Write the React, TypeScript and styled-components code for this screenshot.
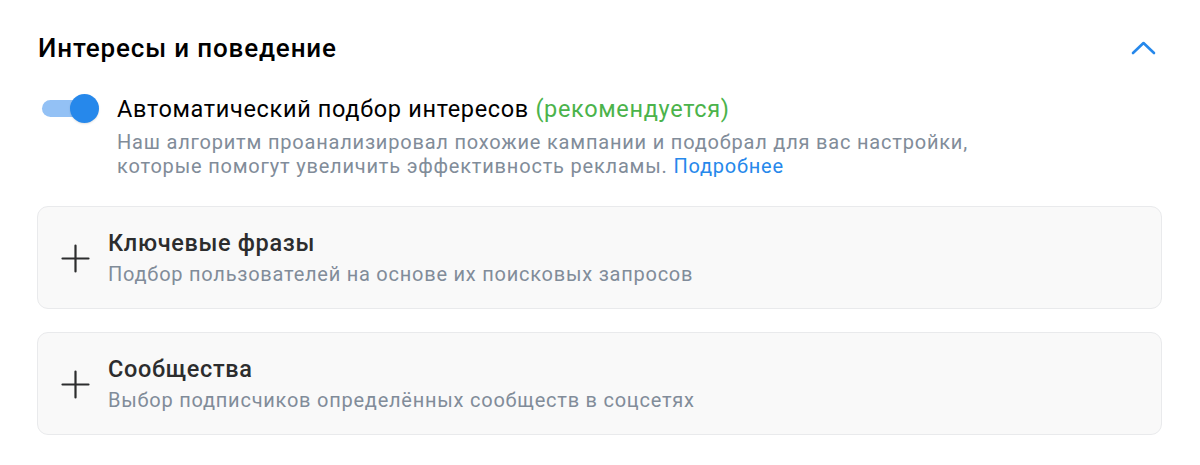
import React from 'react';
import styled, { createGlobalStyle } from 'styled-components';

const GlobalStyle = createGlobalStyle`
  body {
    margin: 0;
    background: #ffffff;
    font-family: Roboto, "Noto Sans", Arial, sans-serif;
    -webkit-font-smoothing: antialiased;
  }
`;

const Section = styled.div`
  padding: 34px 38px 0 37px;
`;

const Header = styled.div`
  display: flex;
  align-items: center;
  justify-content: space-between;
  height: 28px;
  padding-left: 1px;
`;

const Title = styled.h2`
  margin: 0;
  font-size: 26px;
  line-height: 28px;
  font-weight: 500;
  letter-spacing: 0.85px;
  color: #000000;
`;

const Chevron = styled.svg`
  margin-right: 6px;
`;

const AutoRow = styled.div`
  display: flex;
  margin-top: 35px;
`;

const Toggle = styled.div<{ $on: boolean }>`
  position: relative;
  flex: 0 0 auto;
  width: 57px;
  height: 29px;
  margin: -3px 18px 0 5px;

  &::before {
    content: '';
    position: absolute;
    left: 0;
    top: 6px;
    width: 52px;
    height: 17px;
    border-radius: 9px;
    background: ${(p) => (p.$on ? '#93c1f5' : '#d6d9de')};
  }

  &::after {
    content: '';
    position: absolute;
    top: 0;
    ${(p) => (p.$on ? 'right: 0;' : 'left: 0;')}
    width: 29px;
    height: 29px;
    border-radius: 50%;
    background: ${(p) => (p.$on ? '#2688eb' : '#ffffff')};
    box-shadow: 0 1px 2px rgba(0, 0, 0, 0.12);
  }
`;

const AutoText = styled.div`
  display: flex;
  flex-direction: column;
`;

const Label = styled.div`
  font-size: 23.5px;
  line-height: 24px;
  letter-spacing: 0.66px;
  color: #000000;
`;

const Recommended = styled.span`
  color: #4bb34b;
`;

const Description = styled.div`
  margin-top: 9px;
  font-size: 20px;
  line-height: 24px;
  letter-spacing: 0.8px;
  color: #818c99;
`;

const Link = styled.a`
  color: #2688eb;
  text-decoration: none;
`;

const Cards = styled.div`
  display: flex;
  flex-direction: column;
  gap: 23px;
  margin-top: 28px;
`;

const Card = styled.div`
  display: flex;
  align-items: center;
  padding: 24px 23px 22px;
  background: #f9f9f9;
  border: 1px solid #e9eaec;
  border-radius: 11px;
`;

const PlusIcon = styled.svg`
  flex: 0 0 auto;
  margin-right: 18px;
`;

const CardText = styled.div`
  display: flex;
  flex-direction: column;
`;

const CardTitle = styled.div`
  font-size: 23.5px;
  line-height: 24px;
  font-weight: 500;
  letter-spacing: 0.66px;
  color: #2c2d2e;
`;

const CardSubtitle = styled.div`
  margin-top: 7px;
  font-size: 20px;
  line-height: 24px;
  letter-spacing: 0.76px;
  color: #818c99;
`;

const cards = [
  { title: 'Ключевые фразы', subtitle: 'Подбор пользователей на основе их поисковых запросов' },
  { title: 'Сообщества', subtitle: 'Выбор подписчиков определённых сообществ в соцсетях' },
];

const Plus = () => (
  <PlusIcon width="29" height="29" viewBox="0 0 29 29" fill="none">
    <path d="M14.5 1.5v26M1.5 14.5h26" stroke="#2c2d2e" strokeWidth="2.2" strokeLinecap="round" />
  </PlusIcon>
);

export default function App() {
  return (
    <>
      <GlobalStyle />
      <Section>
        <Header>
          <Title>Интересы и поведение</Title>
          <Chevron width="25" height="14" viewBox="0 0 25 14" fill="none">
            <path d="M2 12L12.5 2L23 12" stroke="#2688eb" strokeWidth="2.6" strokeLinecap="round" strokeLinejoin="round" />
          </Chevron>
        </Header>
        <AutoRow>
          <Toggle $on />
          <AutoText>
            <Label>
              Автоматический подбор интересов <Recommended>(рекомендуется)</Recommended>
            </Label>
            <Description>
              Наш алгоритм проанализировал похожие кампании и подобрал для вас настройки,
              <br />
              которые помогут увеличить эффективность рекламы. <Link href="#">Подробнее</Link>
            </Description>
          </AutoText>
        </AutoRow>
        <Cards>
          {cards.map((c) => (
            <Card key={c.title}>
              <Plus />
              <CardText>
                <CardTitle>{c.title}</CardTitle>
                <CardSubtitle>{c.subtitle}</CardSubtitle>
              </CardText>
            </Card>
          ))}
        </Cards>
      </Section>
    </>
  );
}
